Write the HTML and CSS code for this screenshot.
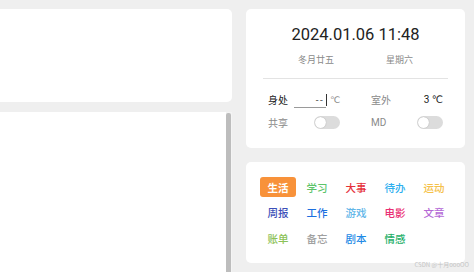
FILE: index.html
```html
<!DOCTYPE html>
<html lang="zh-CN">
<head>
<meta charset="utf-8">
<link rel="stylesheet" href="styles.css">
</head>
<body>
<div class="page">
  <div class="left">
    <div class="card top-card"></div>
    <div class="panel">
      <div class="panel-body"></div>
      <div class="scroll"><div class="thumb"></div></div>
    </div>
  </div>
  <div class="right">
    <div class="card clock">
      <div class="datetime">2024.01.06 11:48</div>
      <div class="sub">
        <span>冬月廿五</span>
        <span>星期六</span>
      </div>
      <div class="divider"></div>
      <div class="grid">
        <div class="cell">
          <span class="label strong">身处</span>
          <span class="temp-in">
            <span class="input">--</span><span class="caret"></span><span class="unit light">℃</span>
          </span>
        </div>
        <div class="cell">
          <span class="label">室外</span>
          <span class="value">3 ℃</span>
        </div>
        <div class="cell">
          <span class="label">共享</span>
          <span class="switch"><span class="knob"></span></span>
        </div>
        <div class="cell">
          <span class="label latin">MD</span>
          <span class="switch"><span class="knob"></span></span>
        </div>
      </div>
    </div>
    <div class="card tags">
      <span class="tag active">生活</span>
      <span class="tag c-study">学习</span>
      <span class="tag c-big">大事</span>
      <span class="tag c-todo">待办</span>
      <span class="tag c-sport">运动</span>
      <span class="tag c-week">周报</span>
      <span class="tag c-work">工作</span>
      <span class="tag c-game">游戏</span>
      <span class="tag c-movie">电影</span>
      <span class="tag c-article">文章</span>
      <span class="tag c-bill">账单</span>
      <span class="tag c-memo">备忘</span>
      <span class="tag c-script">剧本</span>
      <span class="tag c-emotion">情感</span>
    </div>
  </div>
</div>
<div class="watermark">CSDN @十月oooOO</div>
</body>
</html>
```

FILE: styles.css
```css
html, body {
  margin: 0;
  padding: 0;
  height: 100%;
  overflow: hidden;
}
body {
  background: #efefef;
  font-family: "Noto Sans CJK SC", "Noto Sans", sans-serif;
  position: relative;
}
.page {
  display: flex;
  gap: 14px;
  padding-top: 9px;
  height: 100%;
  box-sizing: border-box;
}
.left {
  width: 242px;
  margin-left: -10px;
  display: flex;
  flex-direction: column;
  gap: 10px;
}
.card {
  background: #fff;
  border-radius: 5px;
}
.top-card {
  height: 93px;
}
.panel {
  flex: 1;
  background: #fff;
  display: flex;
}
.panel-body {
  flex: 1;
}
.scroll {
  width: 5px;
  padding: 1px 1px 0 0;
  background: #f4f4f4;
  display: flex;
}
.thumb {
  flex: 1;
  background: #bdbdbd;
  border-radius: 2px 2px 0 0;
}
.right {
  width: 219px;
  display: flex;
  flex-direction: column;
  gap: 14px;
}
.clock {
  height: 139px;
  box-sizing: border-box;
  padding: 16px 17px 0;
}
.datetime {
  font-family: Roboto, "Noto Sans", sans-serif;
  font-size: 16.5px;
  line-height: 20px;
  color: #222;
  text-align: center;
}
.sub {
  display: flex;
  justify-content: center;
  gap: 52px;
  margin-top: 9px;
  font-size: 9px;
  line-height: 12px;
  color: #8a8a8a;
}
.divider {
  height: 1px;
  background: #e3e3e3;
  margin-top: 12px;
}
.grid {
  display: grid;
  grid-template-columns: 72px 72px;
  column-gap: 31px;
  row-gap: 8px;
  justify-content: center;
  margin-top: 13px;
}
.cell {
  display: flex;
  justify-content: space-between;
  align-items: center;
  height: 15px;
}
.label {
  font-size: 10px;
  line-height: 14px;
  color: #8a8a8a;
}
.label.strong {
  color: #222;
}
.label.latin {
  font-family: Roboto, "Noto Sans", sans-serif;
}
.temp-in {
  display: flex;
  align-items: center;
}
.input {
  width: 32px;
  border-bottom: 1px solid #9a9a9a;
  text-align: right;
  font-family: "DejaVu Sans", sans-serif;
  font-size: 9px;
  letter-spacing: 1px;
  line-height: 13px;
  color: #444;
  padding-right: 2px;
  box-sizing: border-box;
  margin-top: 2px;
}
.caret {
  width: 1px;
  height: 12px;
  background: #333;
}
.unit {
  font-family: "DejaVu Sans", sans-serif;
  font-size: 9px;
  margin-left: 3px;
}
.unit.light {
  color: #888;
}
.value {
  font-family: Roboto, "DejaVu Sans", sans-serif;
  font-size: 10px;
  color: #222;
}
.switch {
  width: 26px;
  height: 13px;
  border-radius: 7px;
  background: #dcdcdc;
  display: flex;
  align-items: center;
  padding: 0 1px;
  box-sizing: border-box;
}
.knob {
  width: 11px;
  height: 11px;
  border-radius: 50%;
  background: #fff;
  box-shadow: 0 0 1px rgba(0,0,0,0.35);
}
.tags {
  height: 101px;
  box-sizing: border-box;
  padding: 15px 13px 0 14px;
  display: grid;
  grid-template-columns: repeat(5, 36px);
  grid-auto-rows: 20px;
  column-gap: 3px;
  row-gap: 5.5px;
  align-content: start;
}
.tag {
  display: flex;
  align-items: center;
  justify-content: center;
  font-size: 10.5px;
  font-weight: 500;
  border-radius: 3px;
}
.tag.active {
  background: #f8923a;
  color: #fff;
  font-weight: 700;
}
.c-study { color: #5cc46a; }
.c-big { color: #e5303a; }
.c-todo { color: #2fb0ef; }
.c-sport { color: #f5c14a; }
.c-week { color: #3d4fb8; }
.c-work { color: #1c6fe0; }
.c-game { color: #62b6e8; }
.c-movie { color: #ea2f73; }
.c-article { color: #b56ad6; }
.c-bill { color: #8cc257; }
.c-memo { color: #a0a0a0; }
.c-script { color: #1e8ae6; }
.c-emotion { color: #25b06a; }
.watermark {
  position: absolute;
  right: 5px;
  bottom: 3px;
  font-size: 6px;
  color: #c4c4c4;
}
```
